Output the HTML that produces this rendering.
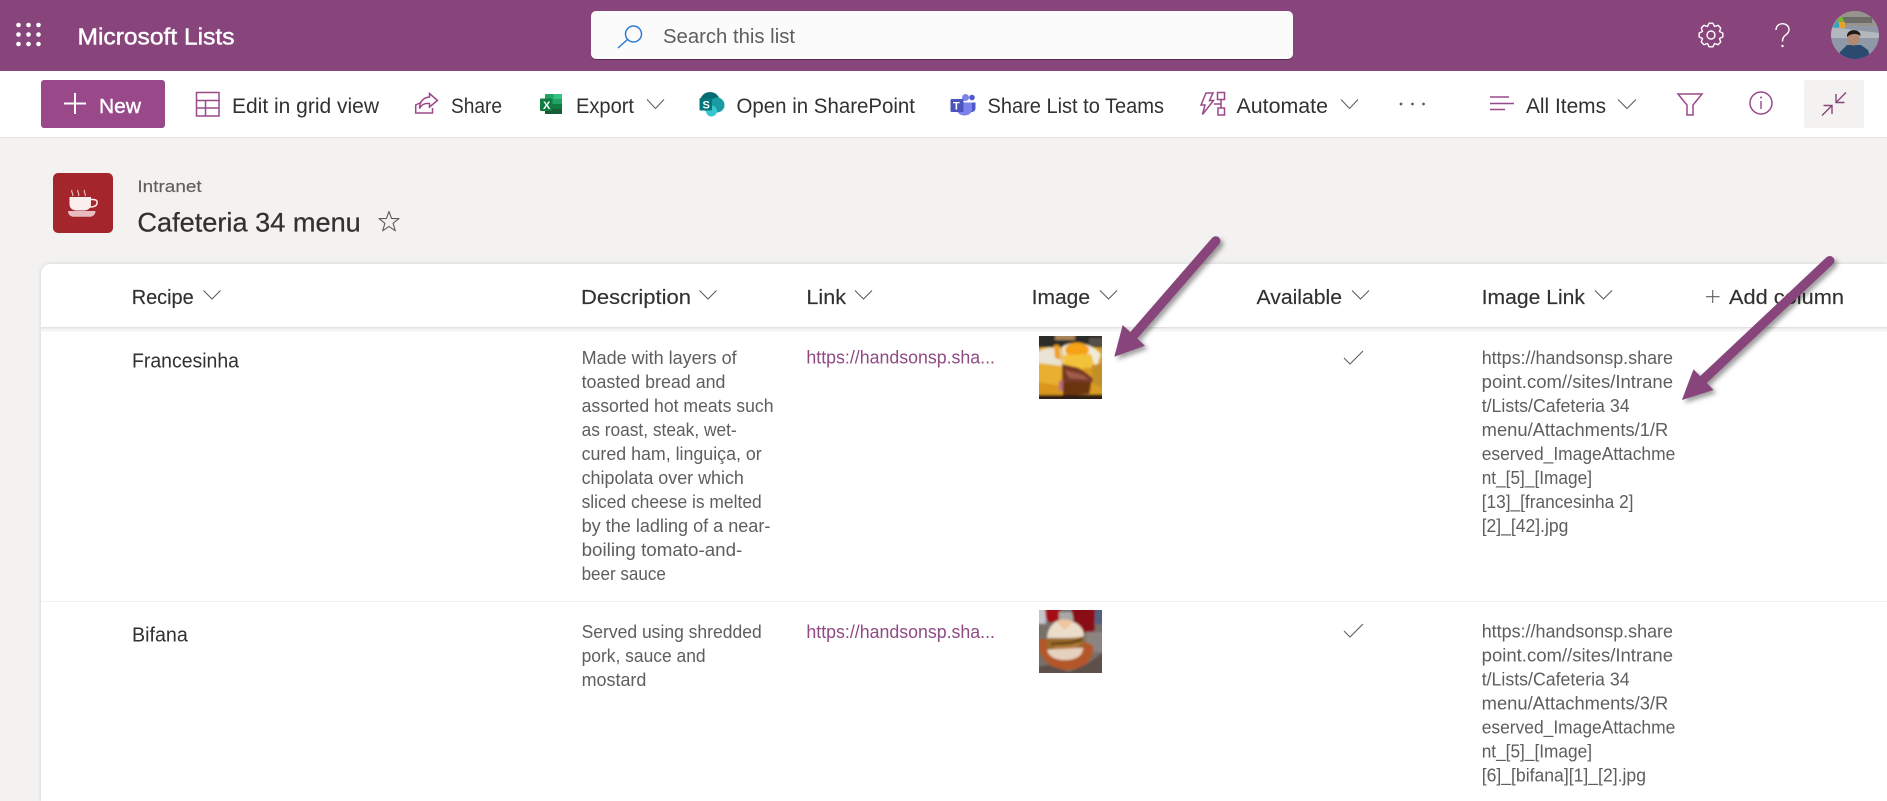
<!DOCTYPE html>
<html lang="en"><head><meta charset="utf-8"><title>Cafeteria 34 menu</title>
<style>
html,body{margin:0;padding:0;width:1887px;height:801px;overflow:hidden;background:#f3f2f1}
svg{display:block}
text{font-family:"Liberation Sans",sans-serif}
.t{font-size:21px;fill:#323130}
.h{font-size:20.5px;fill:#323130;stroke:#323130;stroke-width:.15}
.d{font-size:18px;fill:#605e5c}
.r{font-size:20px;fill:#323130}
.c{fill:none;stroke:#605e5c;stroke-width:1.1}
.p{fill:none;stroke:#99498a;stroke-width:1.5}
</style></head><body>
<svg width="1887" height="801" viewBox="0 0 1887 801" xmlns="http://www.w3.org/2000/svg">
<defs>
<filter id="cs" x="-5%" y="-5%" width="110%" height="110%"><feDropShadow dx="0" dy="0" stdDeviation="2" flood-color="#000" flood-opacity=".14"/></filter>
<filter id="as" x="-30%" y="-30%" width="170%" height="170%"><feDropShadow dx="3" dy="3" stdDeviation="2.5" flood-color="#000" flood-opacity=".38"/></filter>
<filter id="b2"><feGaussianBlur stdDeviation="1"/></filter>
<clipPath id="av"><circle cx="1855" cy="35" r="24"/></clipPath>
</defs>
<rect width="1887" height="801" fill="#f3f2f1"/>

<!-- top bar -->
<rect width="1887" height="71" fill="#88457b"/>
<g fill="#fff">
<circle cx="18.5" cy="25" r="2.3"/><circle cx="28.5" cy="25" r="2.3"/><circle cx="38.5" cy="25" r="2.3"/>
<circle cx="18.5" cy="34.5" r="2.3"/><circle cx="28.5" cy="34.5" r="2.3"/><circle cx="38.5" cy="34.5" r="2.3"/>
<circle cx="18.5" cy="44" r="2.3"/><circle cx="28.5" cy="44" r="2.3"/><circle cx="38.5" cy="44" r="2.3"/>
</g>
<text x="77.5" y="44.5" font-size="23" fill="#fff" stroke="#fff" stroke-width=".45" textLength="157" lengthAdjust="spacingAndGlyphs">Microsoft Lists</text>
<rect x="591" y="12" width="702" height="48" rx="5" fill="#5b2c52"/>
<rect x="591" y="11" width="702" height="48" rx="5" fill="#fbfbfb"/>
<g fill="none" stroke="#2b7cd3" stroke-width="1.5"><circle cx="633.5" cy="34" r="8"/><path d="M627.5 39.500 618 48"/></g>
<text x="663" y="43" font-size="20" style="fill:#605e5c" textLength="132" lengthAdjust="spacingAndGlyphs">Search this list</text>
<g transform="translate(1711 35)" fill="none" stroke="#fff" stroke-width="1.4" stroke-linejoin="round">
<path d="M-1.88-11.85 1.88-11.85 3.52-8.5 7.05-9.71 9.71-7.05 8.5-3.52 11.85-1.88 11.85 1.88 8.5 3.52 9.71 7.05 7.05 9.71 3.52 8.5 1.88 11.85-1.88 11.85-3.52 8.5-7.05 9.71-9.71 7.05-8.5 3.52-11.85 1.88-11.85-1.88-8.5-3.52-9.71-7.05-7.05-9.71-3.52-8.5Z"/>
<circle r="4"/></g>
<path d="M1776 30C1776 26 1779 23.7 1782.5 23.7 1786 23.7 1789 26 1789 29.7 1789 33 1786.3 34.3 1784.3 36.2 1782.8 37.7 1782.5 39 1782.5 41.5" fill="none" stroke="#fff" stroke-width="1.4"/>
<circle cx="1782.5" cy="46" r="1.2" fill="#fff"/>
<g clip-path="url(#av)">
<rect x="1831" y="11" width="48" height="48" fill="#8f98a6"/>
<rect x="1831" y="11" width="48" height="15" fill="#96948c"/>
<rect x="1842" y="17" width="30" height="6" fill="#6d6e6a"/>
<path d="M1831 27 1879 33V38H1831Z" fill="#b3b7be"/>
<path d="M1840 52 1847 45H1861L1868 50 1871 60H1838Z" fill="#2b4a70"/>
<ellipse cx="1853.500" cy="38.500" rx="6" ry="7" fill="#b08a72"/>
<path d="M1847 37C1846 28 1861 28 1860.500 36 1857 33 1851 33 1847 37Z" fill="#1d1a18"/>
<path d="M1833 28 1837 20 1840 27Z" fill="#2aa7c9"/><path d="M1837 20 1842 16 1844 21 1841 24Z" fill="#7fb52e"/><rect x="1839" y="22" width="6" height="6" fill="#e6a32c"/>
</g>

<!-- command bar -->
<rect y="71" width="1887" height="66" fill="#fff"/>
<rect y="137" width="1887" height="1" fill="#e5e3e1"/>
<rect x="41" y="80" width="124" height="48" rx="3" fill="#99498a"/>
<path d="M64 103.500H86M75 93V114" stroke="#fff" stroke-width="2" fill="none"/>
<text x="99" y="113" font-size="20.500" fill="#fff" stroke="#fff" stroke-width=".4" textLength="42" lengthAdjust="spacingAndGlyphs">New</text>

<g class="p"><rect x="196.500" y="92.500" width="22.500" height="23.500"/><path d="M196.500 100.500H219M196.500 108H219M205.500 100.500V116"/></g>
<text x="232" y="113" class="t" textLength="147" lengthAdjust="spacingAndGlyphs">Edit in grid view</text>

<g class="p"><path d="M421 102.500 415.700 105V113H432.500V108"/><path d="M429.500 93.500 437.500 100.500 429.500 107V103.500C425 103 421.500 104.500 419.500 108.500 419.500 102 423 97.500 429.500 97Z"/></g>
<text x="451" y="113" class="t" textLength="51" lengthAdjust="spacingAndGlyphs">Share</text>

<rect x="545" y="94" width="17" height="20" rx="1" fill="#21a366"/>
<rect x="553.500" y="94" width="8.500" height="5" fill="#33c481"/>
<rect x="553.500" y="104" width="8.500" height="5" fill="#107c41"/>
<rect x="545" y="109" width="17" height="5" fill="#185c37"/>
<rect x="545" y="104" width="8.500" height="5" fill="#107c41"/>
<rect x="540" y="98.500" width="12.500" height="12.500" rx="1" fill="#107c41"/>
<text x="543" y="109" font-size="11" font-weight="700" style="fill:#fff">X</text>
<text x="576" y="113" class="t" textLength="58" lengthAdjust="spacingAndGlyphs">Export</text>
<path class="c" d="M647 99.500 655.500 108.500 664 99.500"/>

<circle cx="710" cy="102" r="10" fill="#036c70"/>
<circle cx="717" cy="105" r="7.500" fill="#1a9ba1"/>
<circle cx="711.500" cy="111" r="5.500" fill="#37c6d0"/>
<rect x="699.500" y="98" width="12.500" height="12.500" rx="1" fill="#03787c"/>
<text x="702.500" y="108.500" font-size="11" font-weight="700" style="fill:#fff">S</text>
<text x="736.500" y="113" class="t" textLength="178.500" lengthAdjust="spacingAndGlyphs">Open in SharePoint</text>

<circle cx="972" cy="97.500" r="2.800" fill="#5059c9"/>
<path d="M968 102.500H975.500V108C975.500 111 973 112.500 970.500 112Z" fill="#5059c9"/>
<circle cx="965.500" cy="97.500" r="3.500" fill="#7b83eb"/>
<path d="M957 102.500H972V109C972 113 969 115.500 964.500 115.500 960 115.500 957 113 957 109Z" fill="#7b83eb"/>
<rect x="950.500" y="99" width="13" height="13" rx="1" fill="#4b53bc"/>
<text x="953" y="109.500" font-size="11" font-weight="700" style="fill:#fff">T</text>
<text x="987.500" y="113" class="t" textLength="176.500" lengthAdjust="spacingAndGlyphs">Share List to Teams</text>

<g class="p"><path d="M1206 93H1213L1209.500 100.500H1213.500L1202.500 114.500 1205 105H1201Z"/><rect x="1217.500" y="92.500" width="7" height="7"/><rect x="1218" y="108" width="6.500" height="7"/><path d="M1221 99.500V108M1214 104H1221"/></g>
<text x="1236.500" y="113" class="t" textLength="91.500" lengthAdjust="spacingAndGlyphs">Automate</text>
<path class="c" d="M1341 99.500 1349.500 108.500 1358 99.500"/>
<g fill="#605e5c"><circle cx="1401" cy="104" r="1.400"/><circle cx="1412.500" cy="104" r="1.400"/><circle cx="1423.500" cy="104" r="1.400"/></g>

<path d="M1490 97H1509M1490 103.500H1514M1490 109.500H1505" stroke="#99498a" stroke-width="1.500" fill="none"/>
<text x="1526" y="113" class="t" textLength="80" lengthAdjust="spacingAndGlyphs">All Items</text>
<path class="c" d="M1618 99.500 1627 108.500 1636 99.500"/>
<path class="p" d="M1678 94H1702L1693 105V115H1687V105Z"/>
<g class="p"><circle cx="1761" cy="103" r="11"/></g>
<path d="M1761 101V109" stroke="#99498a" stroke-width="1.400"/><circle cx="1761" cy="97.500" r="1" fill="#99498a"/>
<rect x="1804" y="80" width="60" height="48" rx="2" fill="#f3f2f1"/>
<g fill="none" stroke-width="1.400"><path d="M1846 92.500 1836 102.500M1836 94V102.500H1844.500" stroke="#88457b"/><path d="M1822 115.500 1832 105.500M1832 114V105.500H1823.500" stroke="#88457b"/></g>

<!-- site header -->
<rect x="53" y="173" width="60" height="60" rx="5" fill="#a4262c"/>
<path d="M69.500 197H91V204C91 208 88 210.500 84 210.500H76.500C72.500 210.500 69.500 208 69.500 204Z" fill="#fbeeee"/>
<path d="M90.500 199.500H93C96.500 199.500 97.500 201 97 203.500 96.500 206 94 207 90 207" fill="none" stroke="#fbeeee" stroke-width="1.500"/>
<path d="M68 211H95.500C95.500 214.500 93 216.700 90 216.700H73.500C70.500 216.700 68 214.500 68 211Z" fill="#e8bcbe"/>
<path d="M72 190C70.500 192 74 193.500 72.500 196M78 190C76.500 192 80 193.500 78.500 196M84.500 190C83 192 86.500 193.500 85 196" stroke="#f1cfd0" stroke-width="1" fill="none"/>
<text x="137.400" y="192" font-size="17" style="fill:#605e5c" stroke="#605e5c" stroke-width=".15" textLength="64.300" lengthAdjust="spacingAndGlyphs">Intranet</text>
<text x="137.400" y="231.500" font-size="26.500" style="fill:#323130" stroke="#323130" stroke-width=".25" textLength="223.400" lengthAdjust="spacingAndGlyphs">Cafeteria 34 menu</text>
<path d="M389 211.500 391.600 218.600 399 218.600 393.100 223.300 395.300 230.800 389 226.400 382.700 230.800 384.900 223.300 379 218.600 386.400 218.600Z" fill="none" stroke="#605e5c" stroke-width="1.100" stroke-linejoin="round"/>

<!-- card -->
<path d="M41 801V274A10 10 0 0 1 51 264H1887V801Z" fill="#fff" filter="url(#cs)"/>
<rect x="41" y="327" width="1846" height="1.500" fill="#e3e2e0"/>
<rect x="41" y="328.500" width="1846" height="3" fill="#f6f5f4"/>
<rect x="41" y="601" width="1846" height="1" fill="#f3f2f1"/>

<text x="131.700" y="304" class="h" textLength="62" lengthAdjust="spacingAndGlyphs">Recipe</text>
<path class="c" d="M203.500 290.500 212 299 220.500 290.500"/>
<text x="581" y="304" class="h" textLength="110" lengthAdjust="spacingAndGlyphs">Description</text>
<path class="c" d="M699.500 290.500 708 299 716.500 290.500"/>
<text x="806.400" y="304" class="h" textLength="39.600" lengthAdjust="spacingAndGlyphs">Link</text>
<path class="c" d="M855 290.500 863.500 299 872 290.500"/>
<text x="1031.700" y="304" class="h" textLength="58.300" lengthAdjust="spacingAndGlyphs">Image</text>
<path class="c" d="M1100 290.500 1108.500 299 1117 290.500"/>
<text x="1256.500" y="304" class="h" textLength="85.500" lengthAdjust="spacingAndGlyphs">Available</text>
<path class="c" d="M1352 290.500 1360.500 299 1369 290.500"/>
<text x="1481.700" y="304" class="h" textLength="103.300" lengthAdjust="spacingAndGlyphs">Image Link</text>
<path class="c" d="M1595 290.500 1603.500 299 1612 290.500"/>
<path d="M1706 296.700H1719.500M1712.700 290V303" stroke="#605e5c" stroke-width="1.100" fill="none"/>
<text x="1729" y="304" class="h" textLength="115" lengthAdjust="spacingAndGlyphs">Add column</text>

<text x="132" y="367.500" class="r" textLength="107" lengthAdjust="spacingAndGlyphs">Francesinha</text>
<text x="132" y="641.500" class="r" textLength="55.800" lengthAdjust="spacingAndGlyphs">Bifana</text>

<g class="d">
<text x="581.600" y="364" textLength="155.100" lengthAdjust="spacingAndGlyphs">Made with layers of</text>
<text x="581.600" y="388" textLength="143.900" lengthAdjust="spacingAndGlyphs">toasted bread and</text>
<text x="581.600" y="412" textLength="191.900" lengthAdjust="spacingAndGlyphs">assorted hot meats such</text>
<text x="581.600" y="436" textLength="155.100" lengthAdjust="spacingAndGlyphs">as roast, steak, wet-</text>
<text x="581.600" y="460" textLength="180.100" lengthAdjust="spacingAndGlyphs">cured ham, linguiça, or</text>
<text x="581.600" y="484" textLength="162.300" lengthAdjust="spacingAndGlyphs">chipolata over which</text>
<text x="581.600" y="508" textLength="180.100" lengthAdjust="spacingAndGlyphs">sliced cheese is melted</text>
<text x="581.600" y="532" textLength="188.800" lengthAdjust="spacingAndGlyphs">by the ladling of a near-</text>
<text x="581.600" y="556" textLength="160.700" lengthAdjust="spacingAndGlyphs">boiling tomato-and-</text>
<text x="581.600" y="580" textLength="84.200" lengthAdjust="spacingAndGlyphs">beer sauce</text>
<text x="581.600" y="638" textLength="180.100" lengthAdjust="spacingAndGlyphs">Served using shredded</text>
<text x="581.600" y="662" textLength="124" lengthAdjust="spacingAndGlyphs">pork, sauce and</text>
<text x="581.600" y="686" textLength="64.800" lengthAdjust="spacingAndGlyphs">mostard</text>

<text x="1481.700" y="364" textLength="191.300" lengthAdjust="spacingAndGlyphs">https://handsonsp.share</text>
<text x="1481.700" y="388" textLength="191.300" lengthAdjust="spacingAndGlyphs">point.com//sites/Intrane</text>
<text x="1481.700" y="412" textLength="147.900" lengthAdjust="spacingAndGlyphs">t/Lists/Cafeteria 34</text>
<text x="1481.700" y="436" textLength="186.600" lengthAdjust="spacingAndGlyphs">menu/Attachments/1/R</text>
<text x="1481.700" y="460" textLength="193.600" lengthAdjust="spacingAndGlyphs">eserved_ImageAttachme</text>
<text x="1481.700" y="484" textLength="110.300" lengthAdjust="spacingAndGlyphs">nt_[5]_[Image]</text>
<text x="1481.700" y="508" textLength="151.800" lengthAdjust="spacingAndGlyphs">[13]_[francesinha 2]</text>
<text x="1481.700" y="532" textLength="86.700" lengthAdjust="spacingAndGlyphs">[2]_[42].jpg</text>

<text x="1481.700" y="637.500" textLength="191.300" lengthAdjust="spacingAndGlyphs">https://handsonsp.share</text>
<text x="1481.700" y="661.500" textLength="191.300" lengthAdjust="spacingAndGlyphs">point.com//sites/Intrane</text>
<text x="1481.700" y="685.500" textLength="147.900" lengthAdjust="spacingAndGlyphs">t/Lists/Cafeteria 34</text>
<text x="1481.700" y="709.500" textLength="186.600" lengthAdjust="spacingAndGlyphs">menu/Attachments/3/R</text>
<text x="1481.700" y="733.500" textLength="193.600" lengthAdjust="spacingAndGlyphs">eserved_ImageAttachme</text>
<text x="1481.700" y="757.500" textLength="110.300" lengthAdjust="spacingAndGlyphs">nt_[5]_[Image]</text>
<text x="1481.700" y="781.500" textLength="164.300" lengthAdjust="spacingAndGlyphs">[6]_[bifana][1]_[2].jpg</text>
</g>

<text x="806.400" y="363.500" font-size="18" style="fill:#8f4a84" textLength="188.600" lengthAdjust="spacingAndGlyphs">https://handsonsp.sha...</text>
<text x="806.400" y="638" font-size="18" style="fill:#8f4a84" textLength="188.600" lengthAdjust="spacingAndGlyphs">https://handsonsp.sha...</text>

<path d="M1344 358 1350 364 1363 351" class="c"/>
<path d="M1344 631 1350 637 1363 624" class="c"/>

<!-- food image 1 -->
<svg x="1039" y="336" width="63" height="63" viewBox="0 0 63 63">
<rect width="63" height="63" fill="#d89c24"/>
<g filter="url(#b2)">
<rect x="-2" y="-2" width="67" height="13" fill="#2c2926"/>
<rect x="16" y="-2" width="20" height="6" fill="#a8845a"/>
<rect x="50" y="2" width="15" height="8" fill="#56504a"/>
<path d="M-2 16C6 11 14 11 22 13L23 30-2 27Z" fill="#ebe3d3"/>
<path d="M15 9 20 9 22 24 16 22Z" fill="#f0a01c"/>
<path d="M-2 27 23 30 23 66H-2Z" fill="#e8b02e"/>
<path d="M-2 46 23 50 22 62H-2Z" fill="#d9951c"/>
<path d="M23 11C32 4 52 6 62 18L58 32 24 30Z" fill="#f1ead8"/>
<ellipse cx="38" cy="14" rx="12" ry="7.500" fill="#f5a218"/>
<path d="M24 19 52 18 56 30 38 34 25 30Z" fill="#f2c238"/>
<path d="M23 28 40 32 56 44 50 48 23 46Z" fill="#773828"/>
<path d="M26 34 44 39 50 44 30 42Z" fill="#a15c48"/>
<path d="M20 44 26 46 26 56 20 54Z" fill="#bd6c78"/>
<path d="M24 46 52 47 50 58 24 60Z" fill="#6b3410"/>
<path d="M52 30 65 26V52L54 48Z" fill="#c49028"/>
<rect x="-2" y="59" width="67" height="6" fill="#2e1c12"/>
</g>
</svg>

<!-- food image 2 -->
<svg x="1039" y="610" width="63" height="63" viewBox="0 0 63 63">
<rect width="63" height="63" fill="#77706a"/>
<g filter="url(#b2)">
<rect x="-2" y="-2" width="9" height="16" fill="#c4c6cc"/>
<path d="M6-2H23L20 10 12 13 7 9Z" fill="#a41119"/>
<rect x="20" y="2" width="14" height="12" fill="#a9a8a6"/>
<path d="M32-2H57L55 22 41 24 35 12Z" fill="#8a0d14"/>
<rect x="56" y="-2" width="9" height="16" fill="#526180"/>
<rect x="47" y="22" width="18" height="20" fill="#8c8480"/>
<path d="M0 30C-2 40 4 58 26 60 44 60 56 50 54 36 50 30 8 26 0 30Z" fill="#b4562a"/>
<path d="M8 38 H44 C44 46 36 50 26 50 16 50 8 46 8 38Z" fill="#e5d1bd"/>
<path d="M8 28C8 16 18 8 26 10 38 11 46 18 45 28Z" fill="#ebddc9"/>
<path d="M18 12C22 8 30 9 34 12L26 20Z" fill="#f0c69c"/>
<path d="M7 30C18 26 34 30 45 26L44 36C34 40 16 38 8 40Z" fill="#9a6a2a"/>
<path d="M12 34C22 33 34 34 43 29" stroke="#5a3816" stroke-width="2" fill="none"/>
<path d="M16 37C24 38 34 38 40 34" stroke="#c08040" stroke-width="2" fill="none"/>
<path d="M-2 57 10 55 30 62 48 54 65 42V65H-2Z" fill="#5d504a"/>
</g>
</svg>

<!-- annotation arrows -->
<g filter="url(#as)">
<path d="M1215.700 241 1134 335" stroke="#88457b" stroke-width="9.500" stroke-linecap="round" fill="none"/>
<path d="M1114.300 356.700 1122.700 325 1145 345.700Z" fill="#88457b"/>
</g>
<g filter="url(#as)">
<path d="M1829.700 260.700 1703 380" stroke="#88457b" stroke-width="9.500" stroke-linecap="round" fill="none"/>
<path d="M1681.900 400 1693.500 369.300 1713.600 390Z" fill="#88457b"/>
</g>
</svg>
</body></html>
